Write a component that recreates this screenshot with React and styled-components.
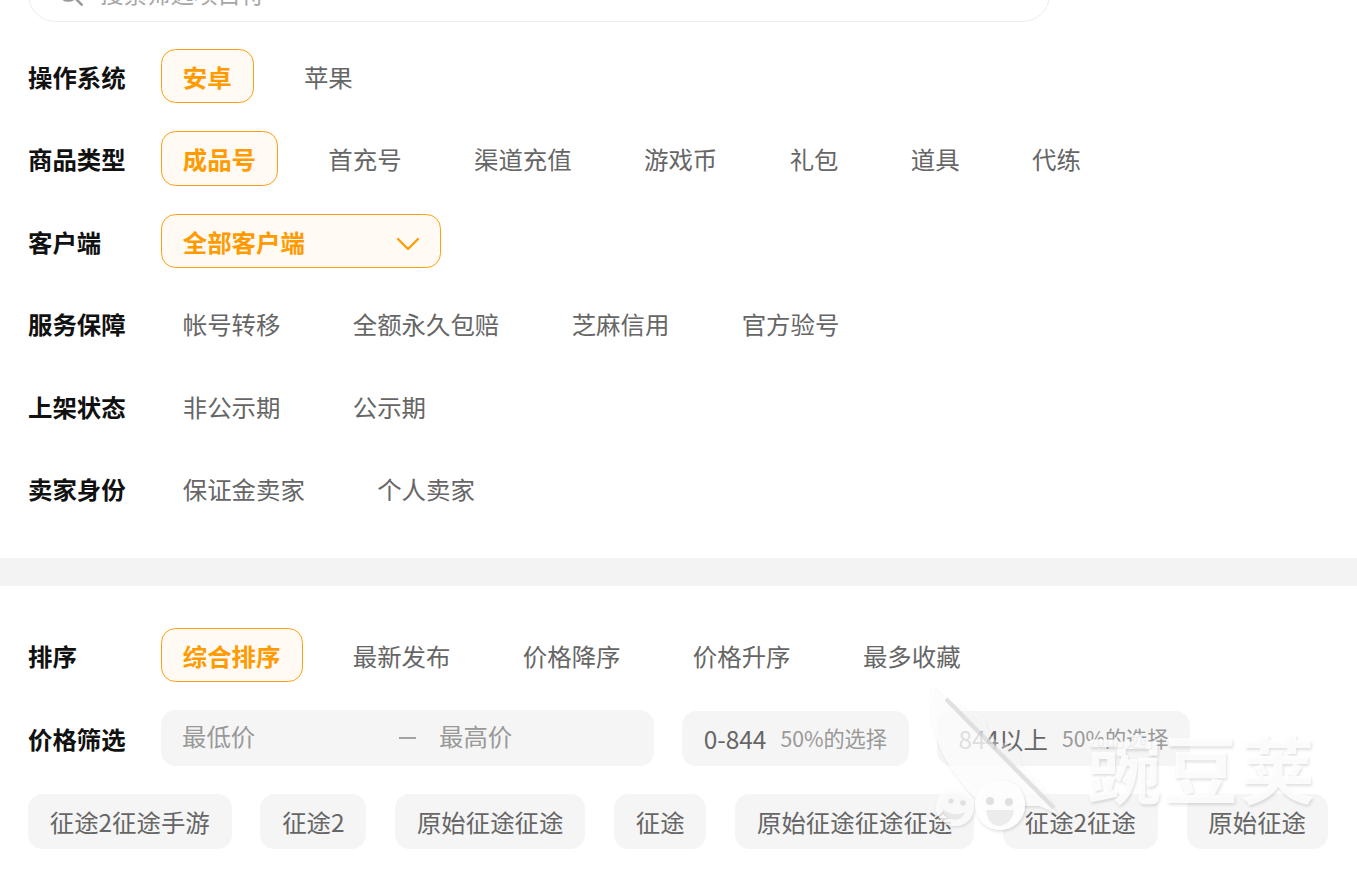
import React from "react";
import styled, { createGlobalStyle } from "styled-components";
import { ChevronDown } from "lucide-react";

const Global = createGlobalStyle`
  html, body { margin: 0; padding: 0; background: #fff; }
  body { font-family: "Noto Sans CJK SC", "Noto Sans", sans-serif; }
  * { box-sizing: border-box; }
`;

const Page = styled.div`
  position: relative;
  width: 1357px;
  height: 869px;
  overflow: hidden;
  background: #fff;
`;

const SearchWrap = styled.div`
  padding: 0 307px 0 28px;
  margin-top: -33px;
`;

const SearchBar = styled.div`
  height: 55px;
  border: 1px solid #ececec;
  border-radius: 28px;
  display: flex;
  align-items: center;
  gap: 16px;
  padding: 0 0 4px 27px;
  color: #a6a6a6;
  font-size: 23.5px;
`;

const FilterSection = styled.section`
  padding: 27px 0 42.3px 28px;
  display: flex;
  flex-direction: column;
  gap: 28.2px;
`;

const SortSection = styled.section`
  padding: 42px 0 0 28px;
  display: flex;
  flex-direction: column;
  gap: 28px;
`;

const Band = styled.div`
  height: 28px;
  background: #f3f3f3;
`;

const Row = styled.div`
  display: flex;
  align-items: center;
`;

const Label = styled.div`
  width: 133px;
  flex: none;
  padding-top: 0.4px;
  font-size: 24.43px;
  font-weight: 700;
  color: #111;
  line-height: 1.2;
`;

const Options = styled.div`
  display: flex;
  gap: 28.95px;
`;

const Option = styled.div`
  height: 54.3px;
  padding: 0 ${(p) => (p.$active ? "21.4px" : "20.71px")} 0 20.71px;
  margin-right: ${(p) => (p.$active ? "-0.7px" : "0")};
  border-radius: 14.5px;
  display: flex;
  align-items: center;
  justify-content: space-between;
  white-space: nowrap;
  font-size: 24.43px;
  border: 1px solid ${(p) => (p.$active ? "#ff9f0f" : "transparent")};
  background: ${(p) => (p.$active ? "#fffaf4" : "transparent")};
  color: ${(p) => (p.$active ? "#ff9a00" : "#666")};
  font-weight: ${(p) => (p.$active ? 700 : 400)};
  width: ${(p) => p.$width || "auto"};
`;

const PriceBox = styled.div`
  width: 493px;
  height: 56px;
  background: #f5f5f5;
  border-radius: 14.5px;
  display: flex;
  align-items: center;
  padding: 0 0 5px 21px;
  font-size: 24.43px;
  color: #999;
`;

const PriceLow = styled.span`
  width: 216px;
`;

const PriceDash = styled.span`
  width: 17px;
  height: 2px;
  background: #a3a3a3;
  margin: 5px 23px 0 1px;
`;

const PriceChoices = styled.div`
  display: flex;
  gap: 28px;
  margin-left: 28px;
`;

const PriceChoice = styled.div`
  height: 55px;
  margin-top: 1px;
  background: #f5f5f5;
  border-radius: 14.5px;
  padding: 0 21.7px;
  display: flex;
  align-items: center;
  gap: 14px;
  font-size: 24.43px;
  color: #666;
  white-space: nowrap;
`;

const Share = styled.span`
  font-size: 21.2px;
  color: #999;
  margin-top: -2px;
`;

const Tags = styled.div`
  display: flex;
  gap: 28.95px;
`;

const Tag = styled.div`
  height: 55px;
  padding: 0 21.71px;
  background: #f5f5f5;
  border-radius: 14.5px;
  display: flex;
  align-items: center;
  font-size: 24.43px;
  color: #666;
  white-space: nowrap;
`;

const Watermark = styled.div`
  position: absolute;
  left: 920px;
  top: 680px;
  width: 420px;
  height: 170px;
  pointer-events: none;
`;

const PodArt = styled.svg`
  position: absolute;
  left: 0;
  top: 0;
  width: 150px;
  height: 170px;
`;

const Brand = styled.div`
  position: absolute;
  left: 167px;
  top: 41px;
  font-size: 74px;
  letter-spacing: 3px;
  line-height: 90px;
  font-weight: 700;
  color: rgba(255, 255, 255, 0.86);
  text-shadow: 1px 2px 3px rgba(0, 0, 0, 0.12);
  white-space: nowrap;
`;

const filters = [
  { label: "操作系统", options: ["安卓", "苹果"], active: 0 },
  { label: "商品类型", options: ["成品号", "首充号", "渠道充值", "游戏币", "礼包", "道具", "代练"], active: 0 },
];

const lower = [
  { label: "服务保障", options: ["帐号转移", "全额永久包赔", "芝麻信用", "官方验号"] },
  { label: "上架状态", options: ["非公示期", "公示期"] },
  { label: "卖家身份", options: ["保证金卖家", "个人卖家"] },
];

const tags = ["征途2征途手游", "征途2", "原始征途征途", "征途", "原始征途征途征途", "征途2征途", "原始征途"];

function OptionRow({ label, options, active }) {
  return (
    <Row>
      <Label>{label}</Label>
      <Options>
        {options.map((o, i) => (
          <Option key={o} $active={i === active}>{o}</Option>
        ))}
      </Options>
    </Row>
  );
}

function Pod() {
  return (
    <PodArt viewBox="0 0 150 170" fill="none">
      <defs>
        <filter id="soft" x="-20%" y="-20%" width="140%" height="140%">
          <feDropShadow dx="1" dy="1.5" stdDeviation="1.5" floodColor="#000" floodOpacity="0.16" />
        </filter>
      </defs>
      <path
        d="M30 22 C37 20 45 26 47 33 C58 30 66 38 67 48 C70 56 74 60 80 62 C90 64 100 72 102 88 C110 92 118 100 124 110 L136 130 Z"
        fill="rgba(255,255,255,0.32)"
        filter="url(#soft)"
      />
      <path
        d="M12 6 C7 40 18 82 56 118 L68 126 L120 126 L138 134 Z"
        fill="rgba(255,255,255,0.78)"
        filter="url(#soft)"
      />
      <path d="M26 19 L134 128" stroke="#dcdcdc" strokeWidth="4.5" opacity="0.85" />
      <circle cx="35" cy="127" r="19" fill="rgba(255,255,255,0.75)" filter="url(#soft)" />
      <circle cx="80" cy="125" r="25" fill="rgba(255,255,255,0.92)" filter="url(#soft)" />
      <circle cx="31" cy="121" r="2.6" fill="#e0e0e0" />
      <circle cx="43" cy="123" r="2.8" fill="#e0e0e0" />
      <path d="M22 128 C27 134 37 136 45 132 C42 142 28 144 22 128 Z" fill="#e8e8e8" />
      <circle cx="70" cy="121" r="4" fill="#e0e0e0" />
      <circle cx="89" cy="122" r="4" fill="#e0e0e0" />
      <path d="M66 130 L94 130 C93 141 84 146 79 146 C73 146 67 141 66 130 Z" fill="#ececec" />
    </PodArt>
  );
}

export default function App() {
  return (
    <Page>
      <Global />
      <SearchWrap>
        <SearchBar>
          <svg width="28" height="28" viewBox="0 0 24 24" fill="none" stroke="#999" strokeWidth="2.2" strokeLinecap="round">
            <circle cx="10.5" cy="10.5" r="8" />
            <path d="M17 17l5 5" />
          </svg>
          搜索筛选项目符
        </SearchBar>
      </SearchWrap>
      <FilterSection>
        {filters.map((f) => (
          <OptionRow key={f.label} {...f} />
        ))}
        <Row>
          <Label>客户端</Label>
          <Option $active $width="280px">
            全部客户端
            <ChevronDown size={40} strokeWidth={1.3} color="#ff9a00" style={{ margin: "5px -9px 0 0" }} />
          </Option>
        </Row>
        {lower.map((f) => (
          <OptionRow key={f.label} {...f} />
        ))}
      </FilterSection>
      <Band />
      <SortSection>
        <OptionRow label="排序" options={["综合排序", "最新发布", "价格降序", "价格升序", "最多收藏"]} active={0} />
        <Row>
          <Label>价格筛选</Label>
          <PriceBox>
            <PriceLow>最低价</PriceLow>
            <PriceDash />
            最高价
          </PriceBox>
          <PriceChoices>
            <PriceChoice>0-844<Share>50%的选择</Share></PriceChoice>
            <PriceChoice>844以上<Share>50%的选择</Share></PriceChoice>
          </PriceChoices>
        </Row>
        <Tags>
          {tags.map((t, i) => (
            <Tag key={i}>{t}</Tag>
          ))}
        </Tags>
      </SortSection>
      <Watermark>
        <Pod />
        <Brand>豌豆荚</Brand>
      </Watermark>
    </Page>
  );
}
